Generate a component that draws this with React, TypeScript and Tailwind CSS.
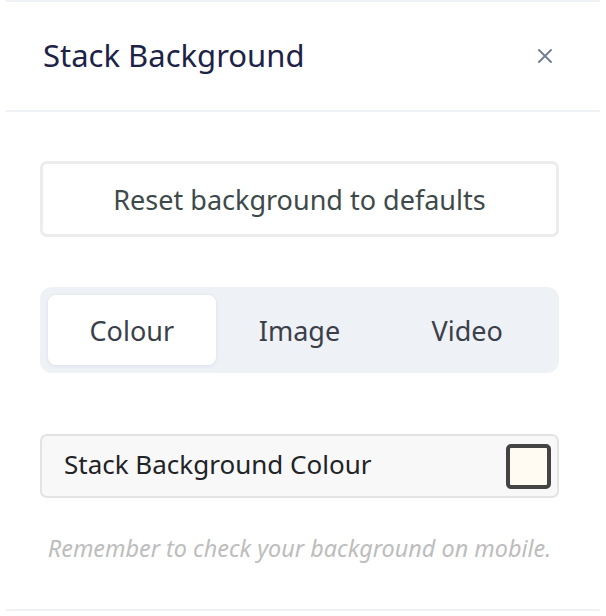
import React from "react";

export default function App() {
  const font = { fontFamily: "'Noto Sans', sans-serif" };
  return (
    <div className="w-[606px] h-[616px] bg-white flex flex-col" style={font}>
      <div className="h-[2px] mx-[6px] bg-[#eef1f5]" />
      <div className="h-[108px] flex items-center justify-between pl-[43px] pr-[53px]">
        <h1 className="text-[31px] text-[#1d2347] leading-none mb-[2px]">Stack Background</h1>
        <button className="w-[16px] h-[16px] flex items-center justify-center">
          <svg width="16" height="16" viewBox="0 0 16 16" fill="none" stroke="#738091" strokeWidth="2" strokeLinecap="round">
            <path d="M2 2L14 14M14 2L2 14" />
          </svg>
        </button>
      </div>
      <div className="h-[2px] mx-[6px] bg-[#eef1f5]" />
      <div className="pl-[40px] pr-[47px] flex flex-col">
        <button className="mt-[49px] h-[76px] w-full border-[3px] border-[#ececec] rounded-[7px] bg-white text-[27px] text-[#3e4a4a] flex items-center justify-center pt-[2px]">
          Reset background to defaults
        </button>
        <div className="mt-[50px] h-[86px] rounded-[12px] bg-[#eef1f6] p-[8px] grid grid-cols-3">
          <div className="bg-white rounded-[8px] shadow-[0_1px_4px_rgba(30,40,70,0.08)] flex items-center justify-center text-[27px] text-[#3a3f4a] pt-[3px]">Colour</div>
          <div className="flex items-center justify-center text-[27px] text-[#3a3f4a] pt-[3px]">Image</div>
          <div className="flex items-center justify-center text-[27px] text-[#3a3f4a] pt-[3px]">Video</div>
        </div>
        <div className="mt-[61px] h-[64px] rounded-[7px] border-2 border-[#e3e3e3] bg-[#f8f8f8] flex items-center justify-between pl-[22px] pr-[6px]">
          <span className="text-[26px] text-[#222326] mb-[3px]">Stack Background Colour</span>
          <div className="w-[45px] h-[45px] rounded-[5px] border-[4px] border-[#444444] bg-[#fffaf2]" />
        </div>
        <p className="mt-[33px] text-center italic text-[23.4px] text-[#bdbdbd] whitespace-nowrap">Remember to check your background on mobile.</p>
      </div>
      <div className="mt-auto mb-[5px] h-[2px] mx-[6px] bg-[#eef1f5]" />
    </div>
  );
}
